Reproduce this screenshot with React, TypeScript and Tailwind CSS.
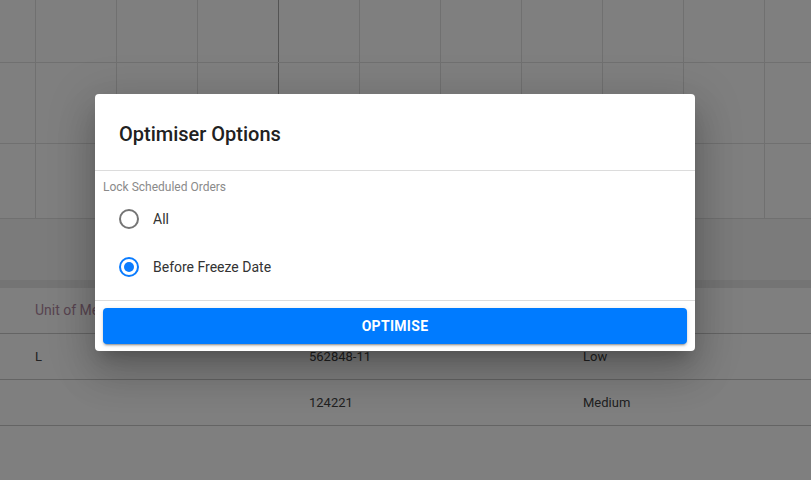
import React from "react";

const cols = Array.from({ length: 9 });

function GridRow({ h }: { h: string }) {
  return (
    <div className={`flex ${h} border-b border-[#e0e0e0]`}>
      <div className="w-[36px] shrink-0 border-r border-[#e0e0e0]" />
      {cols.map((_, i) => (
        <div
          key={i}
          className={`w-[81px] shrink-0 border-r ${i === 2 ? "border-[#a8a8a8]" : "border-[#e0e0e0]"}`}
        />
      ))}
      <div className="flex-1" />
    </div>
  );
}

export default function App() {
  return (
    <div
      className="relative w-[811px] h-[480px] overflow-hidden bg-white"
      style={{ fontFamily: "Roboto, 'Liberation Sans', sans-serif" }}
    >
      {/* underlying page */}
      <div className="flex flex-col">
        <GridRow h="h-[63px]" />
        <GridRow h="h-[81px]" />
        <GridRow h="h-[75px]" />
        <div className="h-[61px] bg-[#f6f6f6]" />
        <div className="h-[8px] bg-[#e8e8e8]" />
        <div className="grid grid-cols-[274px_274px_1fr] h-[46px] items-center border-b border-[#c8c8c8] text-[14px] text-[#b0889f]">
          <div className="pl-[35px]">Unit of Measure</div>
          <div className="pl-[35px]">Product Code</div>
          <div className="pl-[35px]">Priority</div>
        </div>
        <div className="grid grid-cols-[274px_274px_1fr] h-[46px] items-center border-b border-[#c8c8c8] text-[13px] text-[#444]">
          <div className="pl-[35px]">L</div>
          <div className="pl-[35px]">562848-11</div>
          <div className="pl-[35px]">Low</div>
        </div>
        <div className="grid grid-cols-[274px_274px_1fr] h-[46px] items-center border-b border-[#c8c8c8] text-[13px] text-[#444]">
          <div className="pl-[35px]" />
          <div className="pl-[35px]">124221</div>
          <div className="pl-[35px]">Medium</div>
        </div>
      </div>

      {/* overlay */}
      <div className="absolute inset-0 bg-black/50 pt-[94px] pl-[95px]">
        <div className="w-[600px] bg-white rounded-[4px] shadow-[0px_11px_15px_-7px_rgba(0,0,0,0.2),0px_24px_38px_3px_rgba(0,0,0,0.14),0px_9px_46px_8px_rgba(0,0,0,0.12)]">
          <div className="px-6 pt-[24px] pb-[20px] h-[76px] text-[20px] leading-[32px] font-medium text-[#212121]">
            Optimiser Options
          </div>
          <div className="border-t border-[#dcdcdc] px-2 pt-[8px] pb-[9px]">
            <div className="text-[12px] leading-[16px] text-[#8a8a8a]">Lock Scheduled Orders</div>
            <div className="flex flex-col">
              <div className="flex items-center h-[48px] pl-[16px]">
                <div className="w-5 h-5 rounded-full border-2 border-[#757575]" />
                <span className="ml-[14px] text-[14px] text-[#333]">All</span>
              </div>
              <div className="flex items-center h-[48px] pl-[16px]">
                <div className="w-5 h-5 rounded-full border-2 border-[#0a7cff] flex items-center justify-center">
                  <div className="w-[10px] h-[10px] rounded-full bg-[#0a7cff]" />
                </div>
                <span className="ml-[14px] text-[14px] text-[#333]">Before Freeze Date</span>
              </div>
            </div>
          </div>
          <div className="border-t border-[#dcdcdc] px-2 pt-[7px] pb-[7px]">
            <button className="w-full h-9 rounded-[4px] bg-[#007bff] text-white text-[14px] font-bold tracking-[0.3px] shadow-[0px_3px_1px_-2px_rgba(0,0,0,0.2),0px_2px_2px_0px_rgba(0,0,0,0.14),0px_1px_5px_0px_rgba(0,0,0,0.12)]">
              OPTIMISE
            </button>
          </div>
        </div>
      </div>
    </div>
  );
}
